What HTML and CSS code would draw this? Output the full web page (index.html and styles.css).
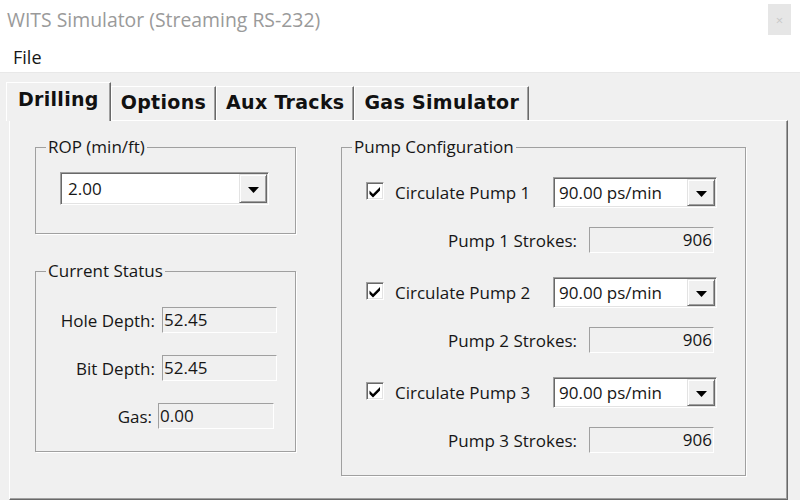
FILE: index.html
```html
<!DOCTYPE html>
<html>
<head>
<meta charset="utf-8">
<title>WITS Simulator</title>
<link rel="stylesheet" href="styles.css">
</head>
<body>
<div class="titlebar">
  <span class="title">WITS Simulator (Streaming RS-232)</span>
  <span class="close">×</span>
</div>
<div class="menubar"><span class="menu-item">File</span></div>
<div class="client">
  <div class="tabs">
    <div class="tab active">Drilling</div>
    <div class="tab">Options</div>
    <div class="tab">Aux Tracks</div>
    <div class="tab">Gas Simulator</div>
  </div>
  <div class="panel">
    <div class="col-left">
      <fieldset class="group rop">
        <legend>ROP (min/ft)</legend>
        <div class="rop-body">
          <div class="combo combo-rop">
            <span class="combo-value">2.00</span>
            <span class="combo-btn"><svg width="11" height="6" viewBox="0 0 11 6"><polygon points="0,0 11,0 5.5,6" fill="#000"/></svg></span>
          </div>
        </div>
      </fieldset>
      <fieldset class="group status">
        <legend>Current Status</legend>
        <div class="status-body">
          <div class="status-row"><span class="lbl">Hole Depth:</span><span class="field">52.45</span></div>
          <div class="status-row"><span class="lbl">Bit Depth:</span><span class="field">52.45</span></div>
          <div class="status-row gas"><span class="lbl">Gas:</span><span class="field">0.00</span></div>
        </div>
      </fieldset>
    </div>
    <fieldset class="group pumps">
      <legend>Pump Configuration</legend>
      <div class="pumps-body">
        <div class="pump">
          <div class="pump-row">
            <span class="check"><span class="box"><svg width="16" height="16" viewBox="0 0 16 16"><polygon points="2.5,7.5 6,11 13,4 13,7.5 6,14.5 2.5,11" fill="#000"/></svg></span>Circulate Pump 1</span>
            <div class="combo combo-pump">
              <span class="combo-value">90.00 ps/min</span>
              <span class="combo-btn"><svg width="11" height="6" viewBox="0 0 11 6"><polygon points="0,0 11,0 5.5,6" fill="#000"/></svg></span>
            </div>
          </div>
          <div class="strokes-row"><span class="lbl">Pump 1 Strokes:</span><span class="field num">906</span></div>
        </div>
        <div class="pump">
          <div class="pump-row">
            <span class="check"><span class="box"><svg width="16" height="16" viewBox="0 0 16 16"><polygon points="2.5,7.5 6,11 13,4 13,7.5 6,14.5 2.5,11" fill="#000"/></svg></span>Circulate Pump 2</span>
            <div class="combo combo-pump">
              <span class="combo-value">90.00 ps/min</span>
              <span class="combo-btn"><svg width="11" height="6" viewBox="0 0 11 6"><polygon points="0,0 11,0 5.5,6" fill="#000"/></svg></span>
            </div>
          </div>
          <div class="strokes-row"><span class="lbl">Pump 2 Strokes:</span><span class="field num">906</span></div>
        </div>
        <div class="pump">
          <div class="pump-row">
            <span class="check"><span class="box"><svg width="16" height="16" viewBox="0 0 16 16"><polygon points="2.5,7.5 6,11 13,4 13,7.5 6,14.5 2.5,11" fill="#000"/></svg></span>Circulate Pump 3</span>
            <div class="combo combo-pump">
              <span class="combo-value">90.00 ps/min</span>
              <span class="combo-btn"><svg width="11" height="6" viewBox="0 0 11 6"><polygon points="0,0 11,0 5.5,6" fill="#000"/></svg></span>
            </div>
          </div>
          <div class="strokes-row"><span class="lbl">Pump 3 Strokes:</span><span class="field num">906</span></div>
        </div>
      </div>
    </fieldset>
  </div>
</div>
</body>
</html>
```
FILE: styles.css
```css
* { box-sizing: border-box; }
html, body { margin: 0; padding: 0; }
body {
  width: 800px;
  height: 500px;
  overflow: hidden;
  background: #fff;
  font-family: "Open Sans", "Noto Sans", sans-serif;
  font-size: 17px;
  color: #161616;
}
.titlebar {
  height: 38px;
  display: flex;
  justify-content: space-between;
  align-items: flex-start;
}
.title {
  padding: 7px 0 0 7px;
  font-size: 19.4px;
  line-height: 26px;
  color: #9a9a9a;
}
.close {
  width: 23px;
  height: 31px;
  margin: 4px 9px 0 0;
  background: #e6e6e6;
  color: #c8c8c8;
  font-size: 13px;
  display: flex;
  align-items: center;
  justify-content: center;
}
.menubar {
  height: 35px;
  padding: 5px 0 0 13px;
  border-bottom: 1px solid #e8e8e8;
  font-size: 18px;
  line-height: 28px;
}
.client {
  background: #f0f0f0;
  height: 427px;
  padding-top: 9px;
}
.tabs {
  display: flex;
  align-items: flex-end;
  margin-left: 6px;
}
.tab {
  font-family: "DejaVu Sans", sans-serif;
  font-weight: bold;
  font-size: 19px;
  letter-spacing: 0.3px;
  line-height: 27px;
  color: #111;
  padding: 2px 9px 4px;
  background: #f0f0f0;
  border-top: 1px solid #fff;
  border-left: 1px solid #fff;
  border-right: 1px solid #696969;
  box-shadow: inset -1px 0 0 #a0a0a0;
}
.tab.active {
  padding: 3px 11px 8px;
  margin-bottom: -1px;
  position: relative;
  z-index: 1;
}
.panel {
  margin-left: 9px;
  width: 779px;
  height: 380px;
  border: 1px solid;
  border-color: #fff #696969 #696969 #fff;
  box-shadow: inset -1px -1px 0 #a0a0a0;
  display: flex;
  align-items: flex-start;
  gap: 45px;
  padding: 16px 0 0 25px;
}
.col-left {
  display: flex;
  flex-direction: column;
  gap: 27px;
  width: 261px;
}
fieldset.group {
  margin: 0;
  padding: 0;
  min-width: 0;
  border: 1px solid #a0a0a0;
  box-shadow: 1px 1px 0 #fff;
}
.group legend {
  margin-left: 10px;
  padding: 0 2px;
  font-size: 17px;
  line-height: 20px;
}
.rop-body { padding: 15px 0 28px 24px; }
.combo {
  display: flex;
  background: #fff;
  border: 1px solid;
  border-color: #a0a0a0 #fff #fff #a0a0a0;
  box-shadow: inset 1px 1px 0 #696969, inset -1px -1px 0 #e3e3e3;
  padding: 1px;
}
.combo-rop { width: 209px; height: 33px; }
.combo-pump { width: 164px; height: 31px; }
.combo-value {
  flex: 1;
  padding-left: 4px;
  display: flex;
  align-items: center;
  font-size: 17px;
}
.combo-rop .combo-value { padding-left: 6px; }
.combo-btn {
  width: 28px;
  background: #f0f0f0;
  border: 1px solid;
  border-color: #e3e3e3 #696969 #696969 #e3e3e3;
  box-shadow: inset 1px 1px 0 #fff, inset -1px -1px 0 #a0a0a0;
  display: flex;
  align-items: center;
  justify-content: center;
  padding-top: 2px;
}
.combo-btn svg { display: block; }
.status-body {
  padding: 26px 0 22px 0;
  display: flex;
  flex-direction: column;
  gap: 22px;
}
.status-row {
  display: flex;
  align-items: center;
  gap: 7px;
  height: 26px;
}
.status-row .lbl { width: 119px; text-align: right; }
.status-row .field { width: 115px; }
.status-row.gas { gap: 6px; }
.status-row.gas .lbl { width: 116px; }
.status-row.gas .field { width: 116px; }
.field {
  height: 26px;
  border: 1px solid;
  border-color: #a0a0a0 #fff #fff #a0a0a0;
  background: #f0f0f0;
  padding: 0 1px;
  line-height: 24px;
  font-size: 17px;
}
.field.num { text-align: right; }
.pumps { width: 405px; }
.pumps-body {
  padding: 20px 0 22px 24px;
  display: flex;
  flex-direction: column;
  gap: 24px;
}
.pump {
  display: flex;
  flex-direction: column;
  gap: 19px;
}
.pump-row {
  display: flex;
  align-items: center;
  height: 31px;
}
.check {
  width: 187px;
  display: flex;
  align-items: center;
  gap: 11px;
}
.box {
  width: 18px;
  height: 18px;
  flex: none;
  background: #fff;
  border: 1px solid;
  border-color: #a0a0a0 #fff #fff #a0a0a0;
  box-shadow: inset 1px 1px 0 #696969, inset -1px -1px 0 #e3e3e3;
  margin-top: -3px;
}
.box svg { display: block; }
.strokes-row {
  display: flex;
  align-items: center;
  gap: 12px;
  height: 26px;
}
.strokes-row .lbl { width: 211px; text-align: right; }
.strokes-row .field { width: 125px; }
```
